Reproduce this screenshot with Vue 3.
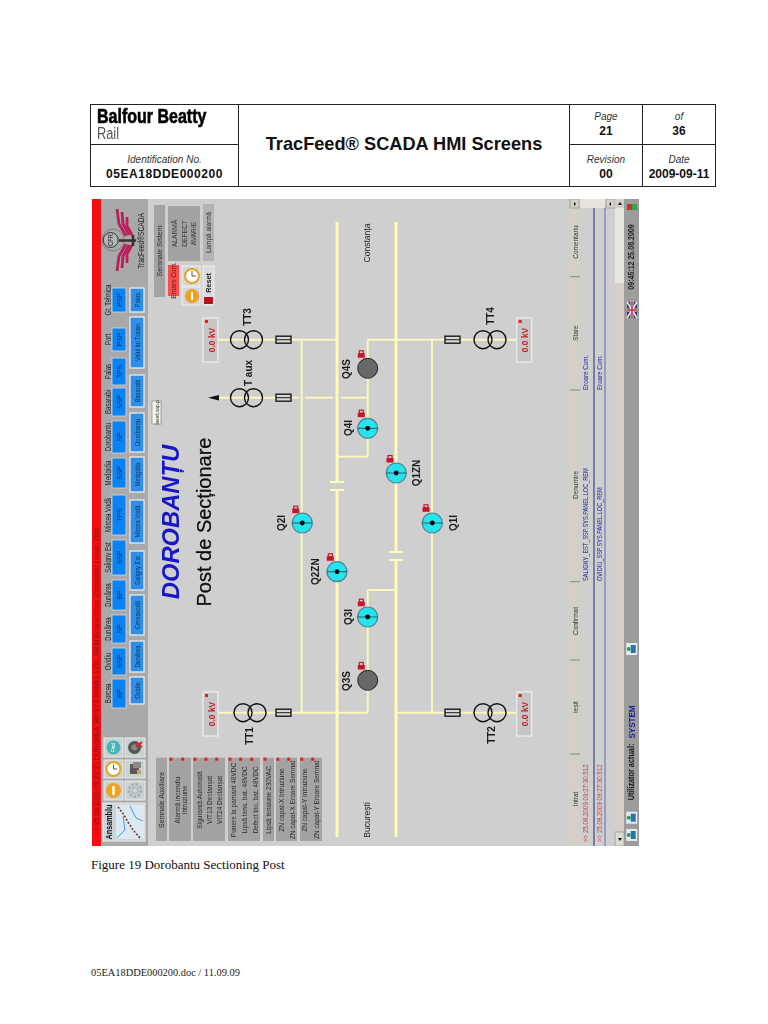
<script setup>
const rot = (x, y, sx = 1) => `translate(${x} ${y}) rotate(-90) scale(${sx} 1)`

const topBtns = [
  ['Gr. Tehnica', 'PSP', 288, 312], ['Port', 'PSP', 328, 351], ['Palas', 'TPS', 358, 385],
  ['Basarabi', 'SSP', 388, 416], ['Dorobantu', 'SP', 421, 453], ['Medgidia', 'SSP', 458, 488],
  ['Mircea Vodă', 'TPS', 495, 535], ['Saligny Est', 'SSP', 540, 575], ['Dunărea', 'BP', 580, 610],
  ['Dunărea', 'SP', 615, 643], ['Ovidiu', 'SSP', 648, 675], ['Borcea', 'BP', 679, 708]
]
const stations = [
  ['Palas', 288, 312], ['Valul lui Traian', 317, 368], ['Basarabi', 375, 407], ['Dorobanțu', 413, 452],
  ['Medgidia', 457, 492], ['Mircea Vodă', 500, 543], ['Saligny Est', 551, 590], ['Cernavodă', 595, 635],
  ['Dunărea', 641, 672], ['Ovidiu', 677, 704]
]
const panels = [
  { x: 169, w: 22, dots: [171, 182.7], lines: [['Alarmă incendiu', 177.5], ['Intruziune', 185]] },
  { x: 193, w: 32, dots: [195, 206, 216.7], lines: [['Siguranță Automată', 200], ['VIT13 Declanșat', 210], ['VIT24 Declanșat', 220]] },
  { x: 228, w: 32, dots: [230, 240.7, 251.7], lines: [['Punere la pamant 48VDC', 234], ['Lipsă tens. bat. 48VDC', 245], ['Defect înc. bat. 48VDC', 255.7]] },
  { x: 263, w: 11, dots: [265], lines: [['Lipsă tensiune 230VAC', 269]] },
  { x: 276, w: 21, dots: [277.7, 288.7], lines: [['ZN capat-X Intruziune', 281.7], ['ZN capat-X Eroare Semnal', 292.7]] },
  { x: 300, w: 22, dots: [301.7, 312.7], lines: [['ZN capat-Y Intruziune', 305], ['ZN capat-Y Eroare Semnal', 316.7]] }
]
const wires = [
  [218, 339.7, 337, 339.7], [301.7, 339.7, 301.7, 712.7], [367.7, 339.7, 516, 339.7], [432, 339.7, 432, 712.7],
  [367.7, 339.7, 367.7, 456.7], [337, 456.7, 367.7, 456.7], [219, 397.7, 299, 397.7], [305, 397.7, 333, 397.7],
  [341, 397.7, 367.7, 397.7], [218, 712.7, 367.7, 712.7], [367.7, 590, 367.7, 712.7], [367.7, 590, 396, 590],
  [396, 712.7, 516, 712.7]
]
const transformers = [[239.5, 339.7], [239.5, 397.7], [243, 712.7], [483, 339.7], [483, 712.7]]
const fuses = [[276, 339.7], [276, 397.7], [276, 712.7], [445, 339.7], [445, 712.7]]
const cyanSw = [[367.7, 428.3], [396.3, 473], [302.3, 523], [432.3, 523], [337, 571.7], [367.7, 617]]
const graySw = [[367.7, 368.3], [367.7, 680.3]]
const locks = [[361.3, 354.3], [361.3, 413.7], [390, 459], [295.7, 509.7], [426, 508.3], [330.3, 557.3], [361.3, 602.7], [361.3, 666]]
const labels = [
  ['TT3', 247.7, 317], ['T aux', 248, 373], ['Q4S', 346.7, 369], ['Q4I', 348, 428], ['Q1ZN', 416.7, 473],
  ['TT4', 490, 316], ['Q2I', 281.7, 523], ['Q1I', 453, 523], ['Q2ZN', 315.7, 571.7], ['Q3I', 348, 617],
  ['Q3S', 346.7, 681], ['TT1', 249, 736], ['TT2', 491.7, 735]
]
const kvBoxes = [[203, 318], [516.7, 318], [203, 692], [516.7, 692]]
const logHead = [
  ['Intrat', 799], ['Ieșit', 707], ['Confirmat', 621], ['Denumire', 485], ['Stare', 333], ['Comentariu', 242]
]
const logDividers = [754, 660, 581.7, 390, 276.7]
const logRows = [
  [585, 'SALIGNY_EST_SSP.SYS.PANEL.LOC_REM'],
  [599.3, 'OVIDIU_SSP.SYS.PANEL.LOC_REM']
]
const people = [[631.7, 649], [631.7, 817.7], [631.7, 835]]
</script>

<template>
  <div class="page">
    <div class="head">
      <div class="cell brand">
        <span class="bb">Balfour Beatty</span>
        <span class="rail">Rail</span>
      </div>
      <div class="cell title">TracFeed® SCADA HMI Screens</div>
      <div class="cell info"><i>Page</i><b>21</b></div>
      <div class="cell info"><i>of</i><b>36</b></div>
      <div class="cell info low"><i>Identification No.</i><b class="ident">05EA18DDE000200</b></div>
      <div class="cell info low"><i>Revision</i><b>00</b></div>
      <div class="cell info low"><i>Date</i><b>2009-09-11</b></div>
    </div>

    <svg class="scada" width="547" height="647" viewBox="92 199 547 647">
      <rect x="92" y="199" width="547" height="647" fill="#cfcfcf" />
      <rect x="92" y="199" width="9" height="647" fill="#f60d12" />
      <text class="t" :transform="rot(96.5, 682, .86)" font-size="8" fill="#8c1010">&gt;&gt; 25.08.2009 09:27:30   DUNAREA_BP.SYS.PANEL.LOC_REM Eroare Com.   Comutator Local - Dist</text>
      <rect x="101" y="199" width="47" height="647" fill="#a9a9a9" />

      <!-- logo -->
      <circle cx="113" cy="240" r="11" fill="none" stroke="#7d7d7d" stroke-width="1" />
      <circle cx="110.7" cy="240" r="7.5" fill="#b4b4b4" stroke="#333" stroke-width="1" />
      <g fill="none" stroke="#b8205a" stroke-width="2.8">
        <path d="M117 209 L119 224 L126 236" />
        <path d="M122 212 L123 224 L129 235" />
        <path d="M127 217 L127 226 L132 235" />
        <path d="M117 271 L119 256 L126 244" />
        <path d="M122 268 L123 256 L129 245" />
        <path d="M127 263 L127 254 L132 245" />
      </g>
      <path d="M119 240.5 H136 M133 235 V246" stroke="#3a3030" stroke-width="2.6" fill="none" />
      <text class="t" :transform="rot(110.7, 240, .9)" font-size="6.5" fill="#222">CFR</text>
      <text class="t" :transform="rot(141.7, 241, .78)" font-size="8.5" fill="#222">TracFeed®SCADA</text>

      <!-- station buttons -->
      <g v-for="b in topBtns" :key="b[2]">
        <text class="t" :transform="rot(107.7, (b[2] + b[3]) / 2, .72)" font-size="8.5" fill="#1c1c1c">{{ b[0] }}</text>
        <rect x="112" :y="b[2]" width="14" :height="b[3] - b[2]" fill="#0c83f2" stroke="#d8d8d8" stroke-width=".8" />
        <text class="t" :transform="rot(119, (b[2] + b[3]) / 2, .85)" font-size="8" fill="#0b3a78">{{ b[1] }}</text>
      </g>
      <g v-for="s in stations" :key="s[1]">
        <rect x="130" :y="s[1]" width="14" :height="s[2] - s[1]" fill="#2f8ee8" stroke="#ececec" stroke-width="1.3" />
        <text class="t" :transform="rot(137, (s[1] + s[2]) / 2, .72)" font-size="8" fill="#12305c">{{ s[0] }}</text>
      </g>

      <!-- tool tiles -->
      <g fill="#c9d2d2" stroke="#ececec" stroke-width="1">
        <rect x="104" y="738" width="19" height="19" />
        <rect x="104" y="760" width="19" height="18" />
        <rect x="104" y="781" width="19" height="19" />
        <rect x="125" y="738" width="20" height="19" />
        <rect x="125" y="760" width="20" height="18" />
        <rect x="125" y="781" width="20" height="19" />
      </g>
      <circle cx="113.5" cy="747.5" r="7" fill="#46b6b4" />
      <text class="tb" :transform="rot(113.5, 747.5, .9)" font-size="4.5" fill="#e8ffff">Find</text>
      <circle cx="113.5" cy="769" r="7" fill="#fff" stroke="#e8a51f" stroke-width="2" />
      <path d="M113.5 764.5 V769 H117" stroke="#555" fill="none" />
      <circle cx="113.5" cy="790.5" r="7.5" fill="#f0a11e" />
      <rect x="112.3" y="786" width="2.4" height="9" fill="#fff" />
      <circle cx="134.5" cy="747.5" r="6.5" fill="#565656" />
      <circle cx="134.5" cy="747.5" r="3" fill="#8a8a8a" />
      <path d="M136 742 L142 747 M142 742 L136 747" stroke="#d0281f" stroke-width="2" />
      <path d="M130 764 H139 V774 H130 Z" fill="#5f5a55" />
      <path d="M133 762 H141 V768 H133 Z" fill="#8d8a84" />
      <rect x="137" y="770" width="4" height="4" fill="#c9a468" />
      <circle cx="135" cy="790.5" r="6" fill="none" stroke="#a8aeae" stroke-width="3" stroke-dasharray="2.5 1.5" />
      <circle cx="135" cy="790.5" r="3" fill="#d0d6d6" stroke="#999" stroke-width=".8" />

      <!-- overview map -->
      <rect x="103" y="803" width="42" height="38" fill="#cbd4d6" stroke="#ececec" stroke-width="1" />
      <rect x="116" y="805" width="28" height="34" fill="#dce8f2" />
      <text class="tb" :transform="rot(109.5, 822, .85)" font-size="8.5" fill="#111">Ansamblu</text>
      <path d="M118 807 L124 815 L128 822 L133 830 L140 838" fill="none" stroke="#6a3a2a" stroke-width="1.6" stroke-dasharray="2 1.6" />
      <path d="M117 838 L125 830 L123 816 M130 806 L136 818 L143 821" fill="none" stroke="#4f96d8" stroke-width="1" />

      <!-- signal panels -->
      <rect x="156" y="757.7" width="11" height="83.3" fill="#a3a3a3" />
      <text class="t" :transform="rot(161.5, 800, .9)" font-size="7.8" fill="#2a2a2a">Semnale Auxiliare</text>
      <g v-for="p in panels" :key="p.x">
        <rect :x="p.x" y="757.7" :width="p.w" height="83.3" fill="#a3a3a3" />
        <rect v-for="d in p.dots" :key="d" :x="d - 1.5" y="757.7" width="3" height="3" fill="#f01818" />
        <text v-for="l in p.lines" :key="l[0]" class="t" :transform="rot(l[1], 800, .86)" font-size="7.6" fill="#2a2a2a">{{ l[0] }}</text>
      </g>

      <rect x="154" y="205" width="11" height="92" fill="#a3a3a3" />
      <text class="t" :transform="rot(159.5, 251, .9)" font-size="7.8" fill="#2a2a2a">Semnale Sistem</text>
      <rect x="168" y="206" width="32" height="55" fill="#a3a3a3" />
      <text class="t" :transform="rot(174.5, 233.5, .85)" font-size="7.8" fill="#3a3a3a">ALARMĂ</text>
      <text class="t" :transform="rot(184, 233.5, .85)" font-size="7.8" fill="#3a3a3a">DEFECT</text>
      <text class="t" :transform="rot(193.5, 233.5, .85)" font-size="7.8" fill="#3a3a3a">AVARIE</text>
      <rect x="203" y="204" width="11" height="57" fill="#b3b3b3" />
      <text class="t" :transform="rot(208.5, 232.5, .85)" font-size="7.6" fill="#333">Lampă alarmă</text>
      <rect x="168" y="265" width="11" height="31" fill="#f4504c" />
      <text class="t" :transform="rot(173.5, 280.5, .85)" font-size="7.6" fill="#6a1010">Eroare Com.</text>
      <rect x="182" y="266" width="18" height="20" fill="#d5d5d5" stroke="#efefef" />
      <circle cx="192" cy="276" r="7" fill="#fff" stroke="#e8a51f" stroke-width="2" />
      <path d="M192 271 V276 H196" stroke="#555" fill="none" />
      <rect x="182" y="287" width="18" height="18" fill="#d5d5d5" stroke="#efefef" />
      <circle cx="192" cy="296" r="7" fill="#f0a11e" />
      <rect x="191" y="292" width="2" height="8" fill="#fff" />
      <rect x="203" y="266" width="11" height="39" fill="#dcdcdc" stroke="#efefef" />
      <text class="tb" :transform="rot(208.5, 283, .9)" font-size="8" fill="#222">Reset</text>
      <rect x="204" y="297" width="9" height="7" fill="#b3131e" />

      <!-- busbars and feeders -->
      <g stroke="#fbf7bd" stroke-width="2" fill="none">
        <line v-for="(w, i) in wires" :key="i" :x1="w[0]" :y1="w[1]" :x2="w[2]" :y2="w[3]" />
      </g>
      <g stroke="#fdfdb9" stroke-width="3" fill="none">
        <path d="M337 222 V482 M337 490 V837 M396 222 V552 M396 560 V837" />
        <path d="M330 482 H344 M330 490 H344 M389 552 H403 M389 560 H403" stroke-width="2.2" />
      </g>
      <g v-for="t in transformers" :key="t[0] + '-' + t[1]" fill="none" stroke="#111" stroke-width="1.4">
        <circle :cx="t[0]" :cy="t[1]" r="9" />
        <circle :cx="t[0] + 14" :cy="t[1]" r="9" />
      </g>
      <g v-for="f in fuses" :key="f[0] + '-' + f[1]">
        <rect :x="f[0]" :y="f[1] - 3.5" width="15" height="7" fill="#d8d8d8" stroke="#1a1a1a" stroke-width="1.4" />
        <line :x1="f[0]" :y1="f[1]" :x2="f[0] + 15" :y2="f[1]" stroke="#1a1a1a" />
      </g>
      <g v-for="c in cyanSw" :key="c[1]">
        <circle :cx="c[0]" :cy="c[1]" r="10" fill="#27e2ef" stroke="#52808a" stroke-width="1.2" />
        <line :x1="c[0] - 10" :y1="c[1]" :x2="c[0] + 10" :y2="c[1]" stroke="#2c5d66" />
        <circle :cx="c[0]" :cy="c[1]" r="2.4" fill="#000" />
      </g>
      <circle v-for="c in graySw" :key="c[1]" :cx="c[0]" :cy="c[1]" r="10" fill="#686868" stroke="#222" />
      <g v-for="l in locks" :key="l[1]">
        <rect :x="l[0] - 2" :y="l[1] - 3.5" width="4" height="3" fill="none" stroke="#c5172a" stroke-width="1.2" />
        <rect :x="l[0] - 3.5" :y="l[1] - 1" width="7" height="4.5" fill="#c5172a" />
      </g>
      <path d="M208 397.7 L219 395 V400.4 Z" fill="#111" />

      <text v-for="l in labels" :key="l[0]" class="tb" :transform="rot(l[1], l[2], .95)" font-size="10.5" fill="#1a1a1a">{{ l[0] }}</text>
      <text class="t" :transform="rot(366.7, 243, .9)" font-size="9.5" fill="#222">Constanța</text>
      <text class="t" :transform="rot(366.7, 820, .9)" font-size="9.5" fill="#222">București</text>

      <g v-for="k in kvBoxes" :key="k[0] + '-' + k[1]">
        <rect :x="k[0]" :y="k[1]" width="15" height="44" fill="#c6c6c6" stroke="#eeeeee" stroke-width="1.2" />
        <rect :x="k[0] + 2" :y="k[1] + 2" width="3" height="3" fill="#f01818" />
        <text class="tb" :transform="rot(k[0] + 8.5, k[1] + 22)" font-size="8.5" fill="#c81e24">0.0 kV</text>
      </g>

      <rect x="152" y="401" width="9" height="23" fill="#f4f4ea" stroke="#777" stroke-width=".6" />
      <text class="t" :transform="rot(156.5, 412.5, .8)" font-size="6" fill="#333">lavaš.sap.p</text>

      <text class="tb" :transform="rot(170, 522, .97)" font-size="24.5" font-style="italic" fill="#1717c8">DOROBANȚU</text>
      <text class="t post" :transform="rot(204, 522)" font-size="20" fill="#0c0c0c">Post de Secționare</text>

      <!-- event log -->
      <rect x="570" y="199" width="10" height="647" fill="#d4d0c8" />
      <line v-for="d in logDividers" :key="d" x1="570" :y1="d" x2="580" :y2="d" stroke="#777" stroke-width=".8" />
      <text v-for="h in logHead" :key="h[0]" class="t" :transform="rot(575, h[1], .85)" font-size="7.6" fill="#333">{{ h[0] }}</text>
      <rect x="570" y="199" width="9" height="9" fill="#d4d0c8" stroke="#888" stroke-width=".6" />
      <rect x="580" y="199" width="25" height="9" fill="#e6e4dc" />
      <rect x="606" y="199" width="9" height="9" fill="#d4d0c8" stroke="#888" stroke-width=".6" />
      <path d="M574 202 V206 L576 204 Z M611 206 V202 L609 204 Z" fill="#111" />
      <line x1="594" y1="208" x2="594" y2="846" stroke="#1b2a80" />
      <line x1="605" y1="208" x2="605" y2="846" stroke="#7d88b4" stroke-width="1.4" />
      <g v-for="r in logRows" :key="r[0]">
        <text class="e" :transform="rot(r[0], 842, .86)" font-size="7.2" fill="#d4383c">&gt;&gt; 25.08.2009 09:27:30.512</text>
        <text class="e" :transform="rot(r[0], 581, .78)" font-size="7.2" fill="#2323a0">{{ r[1] }}</text>
        <text class="e" :transform="rot(r[0], 390, .86)" font-size="7.2" fill="#2323a0">Eroare Com.</text>
      </g>
      <rect x="615" y="199" width="9" height="647" fill="#d4d0c8" />
      <rect x="615" y="208" width="9" height="75" fill="#e8e6e0" />
      <rect x="615" y="832" width="9" height="14" fill="#dcdad2" stroke="#888" stroke-width=".6" />
      <path d="M618 205 H622 L620 202 Z M618 838 H622 L620 841 Z" fill="#111" />

      <!-- status bar -->
      <rect x="624" y="199" width="15" height="647" fill="#9c9c9c" />
      <rect x="627" y="204" width="5" height="6" fill="#c8342a" />
      <rect x="632" y="204" width="5" height="6" fill="#3aa24a" />
      <text class="tb" :transform="rot(631.7, 257, .83)" font-size="8.5" fill="#242424">09:45:12  25.08.2009</text>
      <g>
        <rect x="627" y="302" width="10" height="16" fill="#2c3a78" />
        <path d="M627 302 L637 318 M637 302 L627 318" stroke="#e8e8e8" stroke-width="1.6" />
        <path d="M632 302 V318 M627 310 H637" stroke="#e8e8e8" stroke-width="3" />
        <path d="M632 302 V318 M627 310 H637" stroke="#c92a32" stroke-width="1.5" />
      </g>
      <text class="tb" :transform="rot(631.7, 772, .86)" font-size="8.5" fill="#111">Utilizator actual:</text>
      <text class="tb" :transform="rot(631.7, 722, .95)" font-size="8.5" fill="#1a1aa8">SYSTEM</text>
      <g v-for="p in people" :key="p[1]">
        <rect :x="p[0] - 5.5" :y="p[1] - 6" width="11" height="12" fill="#e4ecec" />
        <path :d="`M${p[0] + 4} ${p[1] - 4} V${p[1] + 4} H${p[0] - 1} V${p[1] - 4} Z`" fill="#2a72b0" />
        <circle :cx="p[0] - 3" :cy="p[1]" r="2" fill="#2f9a60" />
      </g>
    </svg>

    <p class="caption">Figure 19 Dorobantu Sectioning Post</p>
    <p class="foot">05EA18DDE000200.doc / 11.09.09</p>
  </div>
</template>

<style scoped>
.page {
  width: 768px;
  height: 1024px;
  box-sizing: border-box;
  padding-top: 104px;
  background: #fff;
  overflow: hidden;
  font-family: "Liberation Sans", Arial, sans-serif;
}

.head {
  margin-left: 90px;
  width: 626px;
  height: 83px;
  box-sizing: border-box;
  border: 1px solid #222;
  display: grid;
  grid-template-columns: 148px 331px 73px 72px;
  grid-template-rows: 40px 41px;
  color: #111;
}

.cell {
  border-right: 1px solid #222;
  border-bottom: 1px solid #222;
  min-width: 0;
}

.cell:nth-child(2) {
  grid-column: 2;
  grid-row: 1 / 3;
  border-bottom: none;
}

.cell:nth-child(4) {
  border-right: none;
}

.cell:nth-child(5),
.cell:nth-child(6),
.cell:nth-child(7) {
  border-bottom: none;
}

.cell:nth-child(5) {
  grid-column: 1;
  grid-row: 2;
}

.cell:nth-child(6) {
  grid-column: 3;
  grid-row: 2;
}

.cell:nth-child(7) {
  grid-column: 4;
  grid-row: 2;
  border-right: none;
}

.brand {
  display: flex;
  flex-direction: column;
  align-items: flex-start;
  padding-left: 6px;
  line-height: 1;
}

.bb {
  font-weight: 700;
  font-size: 20px;
  margin-top: 1px;
  color: #000;
  -webkit-text-stroke: .6px #000;
  transform: scaleX(.8);
  transform-origin: left center;
  white-space: nowrap;
}

.rail {
  font-size: 16px;
  color: #555;
  transform: scaleX(.8);
  transform-origin: left center;
}

.title {
  display: flex;
  align-items: center;
  justify-content: center;
  font-size: 18.2px;
  font-weight: 700;
  padding-bottom: 3px;
}

.info {
  display: flex;
  flex-direction: column;
  align-items: center;
  justify-content: center;
  gap: 2px;
  font-size: 12px;
}

.low {
  padding-top: 3px;
}

.info i {
  font-size: 10px;
  color: #333;
}

.ident {
  letter-spacing: .55px;
}

.scada {
  display: block;
  margin: 12px 0 0 92px;
  filter: blur(.35px);
}

.t,
.tb,
.e {
  font-family: "Liberation Sans", Arial, sans-serif;
  dominant-baseline: central;
}

.t,
.tb {
  text-anchor: middle;
}

.tb {
  font-weight: 700;
}

.post {
  stroke: #0c0c0c;
  stroke-width: .25px;
}

.caption {
  margin: 11px 0 0 91px;
  font: 13px/16px "Liberation Serif", "Times New Roman", serif;
  color: #111;
}

.foot {
  margin: 93px 0 0 91px;
  font: 10.4px/14px "Liberation Serif", "Times New Roman", serif;
  color: #222;
}
</style>

<style>
html, body { background: #fff; }
</style>
